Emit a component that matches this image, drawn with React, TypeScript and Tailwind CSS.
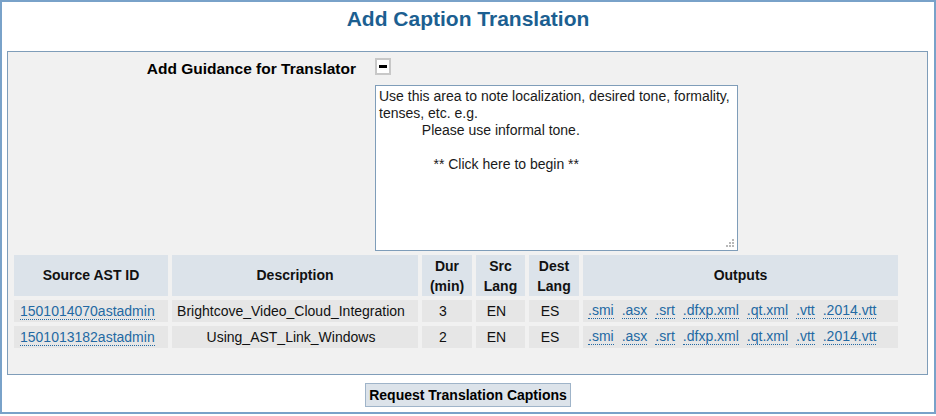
import React from 'react';

const rows = [
  { id: '1501014070astadmin', desc: 'Brightcove_Video_Cloud_Integration', dur: '3', src: 'EN', dest: 'ES' },
  { id: '1501013182astadmin', desc: 'Using_AST_Link_Windows', dur: '2', src: 'EN', dest: 'ES' },
];

const outputs = ['.smi', '.asx', '.srt', '.dfxp.xml', '.qt.xml', '.vtt', '.2014.vtt'];

const guidance =
  'Use this area to note localization, desired tone, formality, tenses, etc. e.g.\n' +
  '           Please use informal tone.\n' +
  '\n' +
  '              ** Click here to begin **';

function DotLink({ children }: { children: React.ReactNode }) {
  return (
    <a href="#" className="text-[#2369a3] no-underline border-b border-dotted border-[#2369a3] leading-[15px]">
      {children}
    </a>
  );
}

// little dotted grip like the one in the reference's textarea corner
function Grip() {
  return (
    <svg className="absolute right-[3px] bottom-[3px]" width="9" height="9" viewBox="0 0 9 9">
      <rect x="6" y="0" width="2" height="2" fill="#b8b8b8" />
      <rect x="3" y="3" width="2" height="2" fill="#b8b8b8" />
      <rect x="6" y="3" width="2" height="2" fill="#b8b8b8" />
      <rect x="0" y="6" width="2" height="2" fill="#b8b8b8" />
      <rect x="3" y="6" width="2" height="2" fill="#b8b8b8" />
      <rect x="6" y="6" width="2" height="2" fill="#b8b8b8" />
    </svg>
  );
}

export default function App() {
  return (
    <div
      className="w-[936px] h-[414px] bg-white border-2 border-[#79a2c9] text-[#111] text-[14px]"
      style={{ fontFamily: '"Liberation Sans", Arial, sans-serif' }}
    >
      <h1 className="h-[49px] pt-[5px] text-center text-[21px] leading-[24px] font-bold text-[#1c5f91]">
        Add Caption Translation
      </h1>

      <div className="ml-[5px] w-[921px] h-[324px] bg-[#f1f1f1] border border-[#7f9db9] pt-[6px]">
        <div className="flex">
          <div className="w-[367px] pr-[19px] pt-[2px] text-right text-[15.5px] leading-[18px] font-bold text-black">
            Add Guidance for Translator
          </div>
          <div className="flex flex-col">
            <button className="w-[16px] h-[17px] bg-white border-2 border-[#c8c8c8] flex items-center justify-center p-0">
              <span className="block w-[8px] h-[3px] bg-black" />
            </button>
            <div className="relative mt-[10px] w-[363px] h-[166px]">
              <textarea
                readOnly
                defaultValue={guidance}
                className="block w-full h-full bg-white border border-[#7f9db9] px-[3px] pt-[2px] text-[14px] leading-[17px] text-[#1a1a1a] outline-none resize-none"
                style={{ fontFamily: '"Liberation Sans", Arial, sans-serif' }}
              />
              <Grip />
            </div>
          </div>
        </div>

        <table className="ml-[2px] table-fixed border-separate border-spacing-[4px] w-[892px]">
          <thead>
            <tr>
              <th className="w-[154px] h-[41px] font-bold leading-[17px] bg-[#dce3ea]">Source AST ID</th>
              <th className="w-[246px] font-bold leading-[17px] bg-[#dce3ea]">Description</th>
              <th className="w-[50px] font-bold leading-[20px] bg-[#dce3ea]">
                Dur
                <br />
                (min)
              </th>
              <th className="w-[49px] font-bold leading-[20px] bg-[#dce3ea]">
                Src
                <br />
                Lang
              </th>
              <th className="w-[50px] font-bold leading-[20px] bg-[#dce3ea]">
                Dest
                <br />
                Lang
              </th>
              <th className="w-[315px] font-bold leading-[17px] bg-[#dce3ea]">Outputs</th>
            </tr>
          </thead>
          <tbody>
            {rows.map((r) => (
              <tr key={r.id}>
                <td className="h-[22px] bg-[#e6e6e6] pl-[6px] text-left leading-[17px]">
                  <DotLink>{r.id}</DotLink>
                </td>
                <td className="bg-[#e6e6e6] pr-[8px] text-center leading-[17px]">{r.desc}</td>
                <td className="bg-[#e6e6e6] pr-[8px] text-center leading-[17px]">{r.dur}</td>
                <td className="bg-[#e6e6e6] pr-[8px] text-center leading-[17px]">{r.src}</td>
                <td className="bg-[#e6e6e6] pr-[8px] text-center leading-[17px]">{r.dest}</td>
                <td className="bg-[#e6e6e6] pl-[5px] leading-[17px]">
                  <div className="flex gap-[8px]">
                    {outputs.map((o) => (
                      <DotLink key={o}>{o}</DotLink>
                    ))}
                  </div>
                </td>
              </tr>
            ))}
          </tbody>
        </table>
      </div>

      <div className="flex justify-center pt-[8px]">
        <button className="h-[24px] px-[3px] bg-[#dce3ea] border border-[#9fb4c9] text-[14px] font-bold text-black leading-[20px]">
          Request Translation Captions
        </button>
      </div>
    </div>
  );
}
